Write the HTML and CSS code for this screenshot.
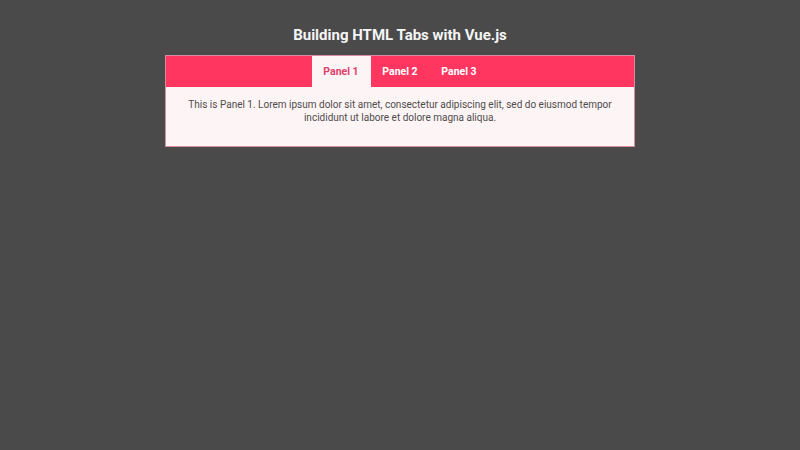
FILE: index.html
```html
<!DOCTYPE html>
<html lang="en">
<head>
    <meta charset="UTF-8">
    <meta name="viewport" content="width=device-width, initial-scale=1.0">
    <title>Building HTML Tabs with Vue.js</title>
    <link rel="stylesheet" href="styles.css">
</head>
<body>

<h1 class="title">Building HTML Tabs with Vue.js</h1>

<div class="tabs">
    <ul class="tab-list">
        <li class="tab active">Panel 1</li>
        <li class="tab">Panel 2</li>
        <li class="tab">Panel 3</li>
    </ul>
    <div class="tab-panel">
        <p>This is Panel 1. Lorem ipsum dolor sit amet, consectetur adipiscing elit, sed do eiusmod tempor incididunt ut labore et dolore magna aliqua.</p>
    </div>
</div>

</body>
</html>
```

FILE: styles.css
```css
* {
    margin: 0;
    padding: 0;
    box-sizing: border-box;
}
body {
    font-family: 'Roboto', sans-serif;
    background-color: #4a4a4a;
    min-height: 100vh;
    padding-top: 25px;
}
.title {
    color: #f5f5f5;
    font-size: 15px;
    font-weight: 700;
    text-align: center;
    line-height: 20px;
    margin-bottom: 10px;
}
.tabs {
    width: 470px;
    margin: 0 auto;
    border: 1px solid #d88aa0;
    background-color: #fdf4f5;
}
.tab-list {
    list-style: none;
    display: flex;
    justify-content: center;
    background-color: #ff3660;
}
.tab {
    width: 59px;
    text-align: center;
    padding: 8px 0;
    line-height: 15px;
    font-size: 10.5px;
    font-weight: 700;
    color: #fff;
    cursor: pointer;
}
.tab.active {
    background-color: #fdf4f5;
    color: #e0406a;
}
.tab-panel {
    padding: 11px 20px 22px;
    text-align: center;
    color: #4d4d4d;
    font-size: 10px;
    line-height: 13px;
}
```
